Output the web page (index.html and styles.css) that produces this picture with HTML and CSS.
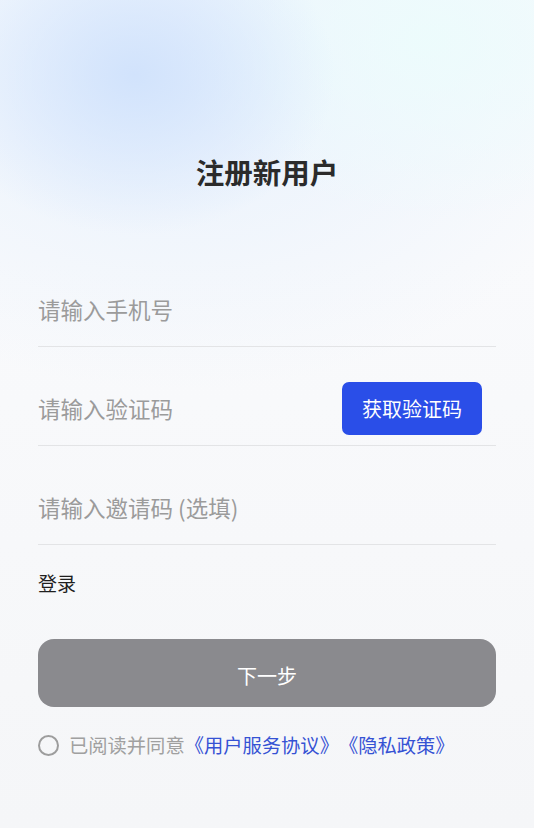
FILE: index.html
```html
<!DOCTYPE html>
<html lang="zh-CN">
<head>
<meta charset="utf-8">
<title>注册新用户</title>
<link rel="stylesheet" href="styles.css">
</head>
<body>
<div class="page">
  <h1 class="title">注册新用户</h1>
  <form class="form">
    <div class="row">
      <input class="field" type="tel" placeholder="请输入手机号">
    </div>
    <div class="row">
      <input class="field" type="text" placeholder="请输入验证码">
      <button type="button" class="code-btn">获取验证码</button>
    </div>
    <div class="row">
      <input class="field" type="text" placeholder="请输入邀请码 (选填)">
    </div>
  </form>
  <div class="login">登录</div>
  <button type="button" class="next-btn">下一步</button>
  <div class="agree">
    <span class="radio"></span>
    <span class="agree-text">已阅读并同意</span><span class="link">《用户服务协议》</span><span class="link">《隐私政策》</span>
  </div>
</div>
</body>
</html>
```
FILE: styles.css
```css
html, body {
  margin: 0;
  padding: 0;
  height: 100%;
}
body {
  font-family: "Noto Sans CJK SC", "Noto Sans", "Liberation Sans", sans-serif;
  background:
    radial-gradient(ellipse 200px 160px at 135px 75px, rgba(208,226,252,0.95), rgba(208,226,252,0) 100%),
    radial-gradient(ellipse 260px 180px at 430px 40px, rgba(236,252,252,0.9), rgba(236,252,252,0) 100%),
    radial-gradient(ellipse 440px 300px at 180px 90px, rgba(226,238,252,0.7), rgba(226,238,252,0) 100%),
    linear-gradient(180deg, #f7fafd 0px, #f9fafc 260px, #f5f6f8 828px);
  min-height: 828px;
}
.page {
  padding: 0 38px;
  display: flex;
  flex-direction: column;
}
.title {
  margin: 152px 0 0;
  height: 40px;
  line-height: 40px;
  font-size: 28.5px;
  font-weight: 700;
  text-align: center;
  color: #2b2b2b;
}
.form {
  margin-top: 56px;
  display: flex;
  flex-direction: column;
}
.row {
  display: flex;
  align-items: center;
  height: 52px;
  padding: 35px 0 11px;
  border-bottom: 1px solid #e3e4e6;
}
.field {
  flex: 1;
  min-width: 0;
  border: none;
  outline: none;
  background: transparent;
  font-family: inherit;
  font-size: 22.5px;
  color: #333;
  padding: 0;
  height: 40px;
}
.field::placeholder {
  color: #9b9b9b;
}
.code-btn {
  flex: none;
  width: 140px;
  height: 53px;
  margin-right: 14px;
  border: none;
  border-radius: 7px;
  background: #2a4ee8;
  color: #fff;
  font-family: inherit;
  font-size: 20px;
  padding: 0;
}
.login {
  margin-top: 25px;
  font-size: 19px;
  line-height: 26px;
  color: #1f1f1f;
}
.next-btn {
  margin-top: 43px;
  height: 68px;
  border: none;
  border-radius: 16px;
  background: #8a8a8e;
  color: #fff;
  font-family: inherit;
  font-size: 20px;
  padding: 5px 0 0;
}
.agree {
  margin-top: 25px;
  display: flex;
  align-items: center;
  font-size: 19.3px;
  line-height: 26px;
}
.radio {
  box-sizing: border-box;
  width: 21px;
  height: 21px;
  border: 2px solid #9d9d9d;
  border-radius: 50%;
  margin-right: 10px;
  flex: none;
}
.agree-text {
  color: #a0a0a0;
}
.link {
  color: #3552d4;
}
```
